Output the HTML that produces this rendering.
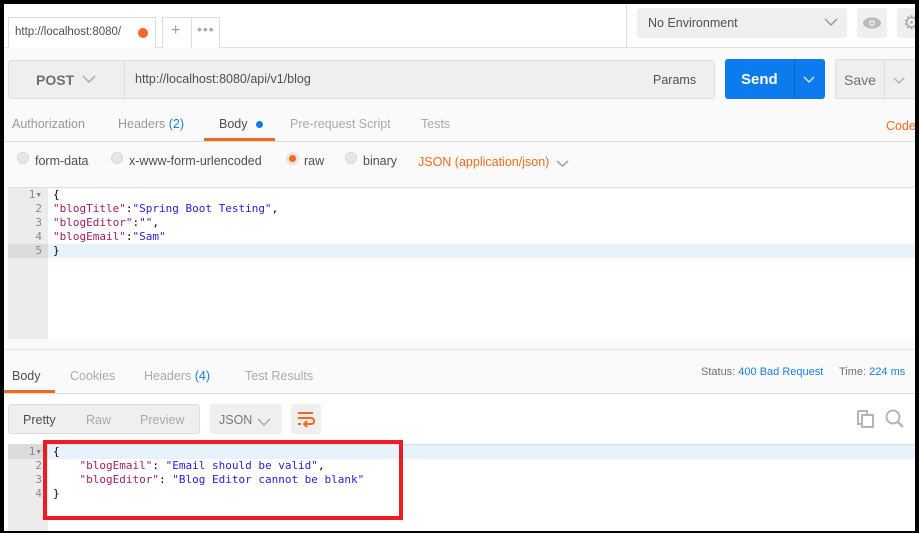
<!DOCTYPE html>
<html><head><style>
*{margin:0;padding:0;box-sizing:border-box}
body{width:919px;height:533px;background:#000;position:relative;overflow:hidden;font-family:"Liberation Sans",sans-serif;font-size:12px;color:#505050}
.a{position:absolute}
#app{position:absolute;left:4px;top:4px;width:911px;height:527px;background:#fafafa;overflow:hidden}
.mono{font-family:"DejaVu Sans Mono","Liberation Mono",monospace;font-size:11px}
.gut{background:#ececec;color:#888;text-align:right}
.k{color:#a11d66}.s{color:#2a1cde}
.radio{width:12px;height:12px;border-radius:50%;background:#e6e6e6;border:1px solid #d8d8d8}
</style></head><body>
<div id="app">
 <div class="a" style="left:0;top:0;width:911px;height:44px;background:#fff;border-bottom:1px solid #e0e0e0"></div>
 <div class="a" style="left:4px;top:13px;width:148px;height:31px;background:#fff;border:1px solid #ddd;border-bottom:none"></div>
 <div class="a" style="left:11px;top:22px;font-size:11.5px;color:#505050">http://localhost:8080/</div>
 <div class="a" style="left:134px;top:24px;width:10px;height:10px;border-radius:50%;background:#f26b1d"></div>
 <div class="a" style="left:158px;top:13px;width:58px;height:31px;background:#fff;border:1px solid #ddd;border-bottom:none"></div>
 <div class="a" style="left:187px;top:13px;width:1px;height:31px;background:#ddd"></div>
 <div class="a" style="left:167px;top:18px;font-size:16px;color:#999">+</div>
 <div class="a" style="left:193px;top:17px;font-size:14px;color:#aaa;letter-spacing:1px">•••</div>
 <div class="a" style="left:622px;top:0;width:1px;height:44px;background:#ddd"></div>
 <div class="a" style="left:633px;top:4px;width:210px;height:30px;background:#efefef;border-radius:3px"></div>
 <div class="a" style="left:644px;top:12px;font-size:12.5px;color:#505050">No Environment</div>
 <svg class="a" style="left:820px;top:14px" width="14" height="9"><path d="M1 1 L7 7 L13 1" stroke="#999" stroke-width="1.5" fill="none"/></svg>
 <div class="a" style="left:853px;top:4px;width:30px;height:30px;background:#efefef;border-radius:3px"></div>
 <svg class="a" style="left:857px;top:12px" width="22" height="14"><ellipse cx="11" cy="7" rx="9" ry="5.5" fill="#bbb"/><circle cx="11" cy="7" r="3" fill="#efefef"/><circle cx="11" cy="7" r="1.5" fill="#bbb"/></svg>
 <div class="a" style="left:893px;top:4px;width:30px;height:30px;background:#efefef;border-radius:3px"></div>
 <div class="a" style="left:899px;top:8px;font-size:19px;color:#aaa">⚙</div>

 <div class="a" style="left:4px;top:56px;width:627px;height:39px;background:#efefef;border:1px solid #ddd;border-radius:3px"></div>
 <div class="a" style="left:120px;top:56px;width:1px;height:39px;background:#ddd"></div>
 <div class="a" style="left:630px;top:56px;width:1px;height:39px;background:#ddd"></div>
 <div class="a" style="left:630px;top:56px;width:81px;height:39px;background:#efefef;border:1px solid #ddd;border-left:none;border-radius:0 3px 3px 0"></div>
 <div class="a" style="left:32px;top:68px;font-size:14px;color:#707070;font-weight:bold">POST</div>
 <svg class="a" style="left:78px;top:71px" width="14" height="9"><path d="M1 1 L7 7 L13 1" stroke="#aaa" stroke-width="1.5" fill="none"/></svg>
 <div class="a" style="left:131px;top:68px;font-size:12.5px;color:#505050">http://localhost:8080/api/v1/blog</div>
 <div class="a" style="left:649px;top:69px;font-size:12.5px;color:#505050">Params</div>
 <div class="a" style="left:721px;top:55px;width:100px;height:40px;background:#0b7bed;border-radius:3px"></div>
 <div class="a" style="left:790px;top:55px;width:1px;height:40px;background:#0a63c0"></div>
 <div class="a" style="left:737px;top:67px;font-size:15px;color:#fff;font-weight:bold">Send</div>
 <svg class="a" style="left:799px;top:72px" width="12" height="8"><path d="M1 1 L6 6 L11 1" stroke="#cfe3fb" stroke-width="1.5" fill="none"/></svg>
 <div class="a" style="left:831px;top:55px;width:81px;height:40px;background:#efefef;border:1px solid #ddd;border-radius:3px"></div>
 <div class="a" style="left:880px;top:55px;width:1px;height:40px;background:#ddd"></div>
 <div class="a" style="left:840px;top:68px;font-size:14px;color:#707070">Save</div>
 <svg class="a" style="left:889px;top:73px" width="12" height="8"><path d="M1 1 L6 6 L11 1" stroke="#aaa" stroke-width="1.3" fill="none"/></svg>

 <div class="a" style="left:0;top:137px;width:911px;height:1px;background:#ddd"></div>
 <div class="a" style="left:8px;top:113px;font-size:12.5px;color:#999">Authorization</div>
 <div class="a" style="left:114px;top:113px;font-size:12.5px;color:#999">Headers <span style="color:#1a7fe0">(2)</span></div>
 <div class="a" style="left:215px;top:113px;font-size:12.5px;color:#505050">Body</div>
 <div class="a" style="left:252px;top:117px;width:7px;height:7px;border-radius:50%;background:#097bed"></div>
 <div class="a" style="left:200px;top:134px;width:71px;height:3px;background:#f26b1d"></div>
 <div class="a" style="left:286px;top:113px;font-size:12.5px;color:#aaa">Pre-request Script</div>
 <div class="a" style="left:417px;top:113px;font-size:12.5px;color:#aaa">Tests</div>
 <div class="a" style="left:882px;top:115px;font-size:12.5px;color:#f26b1d">Code</div>

 <div class="radio a" style="left:13px;top:148px"></div>
 <div class="a" style="left:31px;top:150px;font-size:12.5px;color:#505050">form-data</div>
 <div class="radio a" style="left:107px;top:148px"></div>
 <div class="a" style="left:125px;top:150px;font-size:12.5px;color:#505050">x-www-form-urlencoded</div>
 <div class="radio a" style="left:282px;top:148px;background:#f26b1d;border:3px solid #e6e6e6;width:13px;height:13px"></div>
 <div class="a" style="left:300px;top:150px;font-size:12.5px;color:#505050">raw</div>
 <div class="radio a" style="left:341px;top:148px"></div>
 <div class="a" style="left:359px;top:150px;font-size:12.5px;color:#505050">binary</div>
 <div class="a" style="left:414px;top:151px;font-size:12.5px;color:#f26b1d">JSON (application/json)</div>
 <svg class="a" style="left:552px;top:156px" width="13" height="8"><path d="M1 1 L6.5 6 L12 1" stroke="#999" stroke-width="1.4" fill="none"/></svg>

 <div class="a" style="left:4px;top:183px;width:907px;height:152px;background:#fff;border-top:1px solid #ddd"></div>
 <div class="a gut mono" style="left:4px;top:184px;width:40px;height:151px;line-height:14px;padding:0 6px 0 0">1▾<br>2<br>3<br>4<br>5</div>
 <div class="a" style="left:4px;top:240px;width:907px;height:14px;background:#e8f2fd"></div>
 <div class="a" style="left:4px;top:240px;width:40px;height:14px;background:#dcdcdc"></div>
 <div class="a gut mono" style="left:4px;top:240px;width:40px;line-height:14px;padding-right:6px;background:none">5</div>
 <div class="a mono" style="left:49px;top:184px;line-height:14px;color:#000;white-space:pre">{
<span class="k">"blogTitle"</span>:<span class="s">"Spring Boot Testing"</span>,
<span class="k">"blogEditor"</span>:<span class="s">""</span>,
<span class="k">"blogEmail"</span>:<span class="s">"Sam"</span>
}</div>

 <div class="a" style="left:0;top:345px;width:911px;height:1px;background:#e3e3e3"></div>
 <div class="a" style="left:8px;top:365px;font-size:12.5px;color:#505050">Body</div>
 <div class="a" style="left:66px;top:365px;font-size:12.5px;color:#aaa">Cookies</div>
 <div class="a" style="left:140px;top:365px;font-size:12.5px;color:#aaa">Headers <span style="color:#1a7fe0">(4)</span></div>
 <div class="a" style="left:241px;top:365px;font-size:12.5px;color:#aaa">Test Results</div>
 <div class="a" style="left:0;top:386px;width:51px;height:3px;background:#f26b1d"></div>
 <div class="a" style="left:0;top:389px;width:911px;height:1px;background:#ddd"></div>
 <div class="a" style="left:697px;top:362px;font-size:11px;color:#707070">Status: <span style="color:#1a7fe0">400 Bad Request</span></div>
 <div class="a" style="left:835px;top:362px;font-size:11px;color:#707070">Time: <span style="color:#1a7fe0">224 ms</span></div>
 <div class="a" style="left:0;top:390px;width:911px;height:137px;background:#fff"></div>
 <div class="a" style="left:4px;top:400px;width:192px;height:30px;background:#efefef;border:1px solid #ddd;border-radius:3px"></div>
 <div class="a" style="left:19px;top:409px;font-size:12.5px;color:#505050">Pretty</div>
 <div class="a" style="left:82px;top:409px;font-size:12.5px;color:#aaa">Raw</div>
 <div class="a" style="left:136px;top:409px;font-size:12.5px;color:#aaa">Preview</div>
 <div class="a" style="left:206px;top:400px;width:72px;height:30px;background:#efefef;border-radius:3px"></div>
 <div class="a" style="left:215px;top:409px;font-size:12.5px;color:#777">JSON</div>
 <svg class="a" style="left:253px;top:414px" width="14" height="9"><path d="M1 1 L7 7 L13 1" stroke="#aaa" stroke-width="1.5" fill="none"/></svg>
 <div class="a" style="left:287px;top:400px;width:30px;height:30px;background:#efefef;border-radius:3px"></div>
 <svg class="a" style="left:292px;top:406px" width="20" height="18"><path d="M2 3 H17 M2 8 H15 Q18 8 18 11 Q18 14 15 14 H9 M11 11 L8 14 L11 17 M2 14 H5" stroke="#f26b1d" stroke-width="2" fill="none"/></svg>
 <svg class="a" style="left:853px;top:406px" width="18" height="18"><path d="M1 1 H10 V4 M1 1 V14 H4" stroke="#b5b5b5" stroke-width="2" fill="none"/><rect x="5" y="5" width="11" height="12" stroke="#b5b5b5" stroke-width="2" fill="none"/></svg>
 <svg class="a" style="left:881px;top:405px" width="20" height="20"><circle cx="8" cy="8" r="6.5" stroke="#b5b5b5" stroke-width="2" fill="none"/><path d="M13 13 L18 18" stroke="#b5b5b5" stroke-width="2.5"/></svg>

 <div class="a" style="left:4px;top:440px;width:907px;height:1px;background:#ddd"></div>
 <div class="a" style="left:4px;top:441px;width:907px;height:14px;background:#e8f2fd"></div>
 <div class="a gut mono" style="left:4px;top:441px;width:40px;height:86px;line-height:14px;padding-right:6px">1▾<br>2<br>3<br>4</div>
 <div class="a" style="left:4px;top:441px;width:40px;height:14px;background:#dcdcdc"></div>
 <div class="a gut mono" style="left:4px;top:441px;width:40px;line-height:14px;padding-right:6px;background:none">1▾</div>
 <div class="a mono" style="left:49px;top:441px;line-height:14px;color:#000;white-space:pre">{
    <span class="k">"blogEmail"</span>: <span class="s">"Email should be valid"</span>,
    <span class="k">"blogEditor"</span>: <span class="s">"Blog Editor cannot be blank"</span>
}</div>
 <div class="a" style="left:39px;top:436px;width:360px;height:80px;border:4px solid #ed1c24"></div>
</div>
</body></html>
